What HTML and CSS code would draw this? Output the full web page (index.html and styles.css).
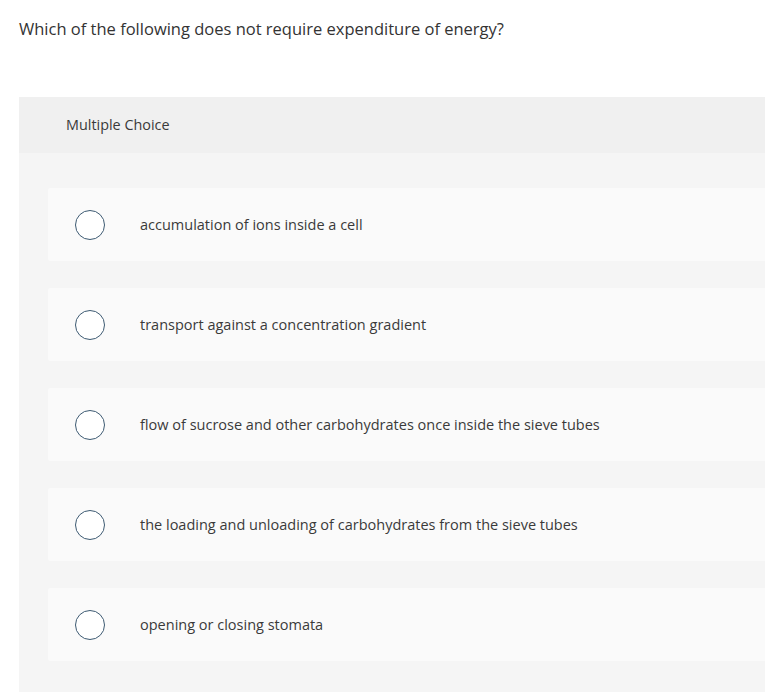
FILE: index.html
```html
<!DOCTYPE html>
<html>
<head>
<meta charset="utf-8">
<link rel="stylesheet" href="styles.css">
</head>
<body>
<div class="page">
  <p class="question">Which of the following does not require expenditure of energy?</p>
  <div class="panel">
    <div class="panel-head">Multiple Choice</div>
    <div class="options">
      <div class="option"><span class="radio"></span><span class="label">accumulation of ions inside a cell</span></div>
      <div class="option"><span class="radio"></span><span class="label">transport against a concentration gradient</span></div>
      <div class="option"><span class="radio"></span><span class="label">flow of sucrose and other carbohydrates once inside the sieve tubes</span></div>
      <div class="option"><span class="radio"></span><span class="label">the loading and unloading of carbohydrates from the sieve tubes</span></div>
      <div class="option"><span class="radio"></span><span class="label">opening or closing stomata</span></div>
    </div>
  </div>
</div>
</body>
</html>
```

FILE: styles.css
```css
html, body {
  margin: 0;
  padding: 0;
  background: #ffffff;
  overflow: hidden;
}
body {
  font-family: "Open Sans", "Liberation Sans", sans-serif;
  color: #333333;
}
.page {
  padding: 0 0 0 19px;
}
.question {
  margin: 0;
  padding-top: 18px;
  height: 97px;
  box-sizing: border-box;
  font-size: 16.5px;
  line-height: 22px;
  color: #333333;
}
.panel {
  background: #f5f5f5;
  padding-bottom: 31px;
}
.panel-head {
  background: #f0f0f0;
  height: 56px;
  box-sizing: border-box;
  padding: 18px 0 0 47px;
  font-size: 14.4px;
  line-height: 20px;
  color: #3a3a3a;
}
.options {
  display: flex;
  flex-direction: column;
  gap: 27px;
  padding: 35px 0 0 29px;
}
.option {
  background: #fafafa;
  height: 73px;
  display: flex;
  align-items: center;
  border-radius: 2px 0 0 2px;
}
.radio {
  width: 28px;
  height: 28px;
  border: 1.6px solid #3d5a72;
  border-radius: 50%;
  margin-left: 27px;
  flex: none;
  background: #fff;
}
.label {
  margin-left: 35px;
  font-size: 14.5px;
  line-height: 20px;
  color: #3a3a3a;
}
```
